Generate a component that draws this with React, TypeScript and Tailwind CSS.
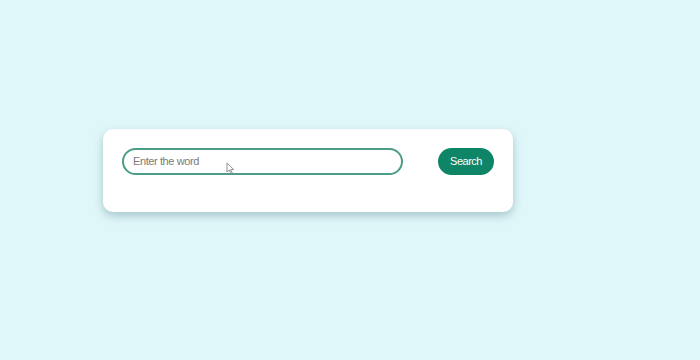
import React from "react";

export default function App() {
  return (
    <div className="w-[700px] h-[360px] bg-[#e0f7fa] pt-[129px] pl-[103px]" style={{ fontFamily: '"Liberation Sans", Arial, sans-serif' }}>
      <div className="relative w-[410px] h-[83px] rounded-[10px] bg-white shadow-[0_4px_10px_rgba(60,110,115,0.35)] pt-[19px] pl-[19px]">
        <div className="flex items-center gap-[35px]">
          <input
            type="text"
            placeholder="Enter the word"
            className="w-[281px] h-[27px] rounded-full border-2 border-[#4b9d87] pl-[9px] pr-[9px] pb-[1px] text-[11px] tracking-[-0.4px] text-[#333] placeholder:text-[#7a7a7a] outline-none bg-white"
          />
          <button className="w-[56px] h-[27px] rounded-full bg-[#0e8566] text-white text-[11px] tracking-[-0.5px] pb-[1px]">Search</button>
        </div>
        <svg className="absolute left-[123px] top-[33px]" width="9" height="13" viewBox="0 0 9 13">
          <path d="M1 1 L1 10 L3.3 8 L5 11.8 L6.3 11.2 L4.7 7.6 L7.8 7.6 Z" fill="white" stroke="#777" strokeWidth="0.8" strokeLinejoin="round" />
        </svg>
      </div>
    </div>
  );
}
